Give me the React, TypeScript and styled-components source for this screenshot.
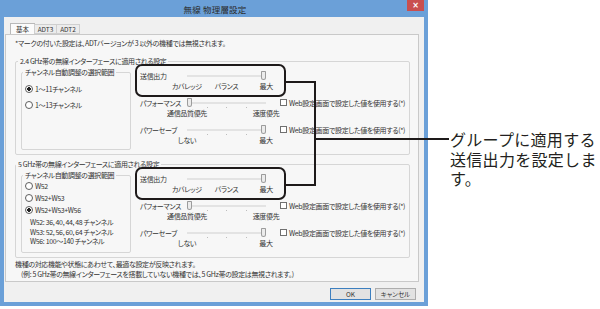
import styled, { createGlobalStyle } from 'styled-components';

const GlobalStyle = createGlobalStyle`
  html, body {
    margin: 0;
    padding: 0;
    background: #fff;
  }
  body {
    font-family: "Noto Sans CJK JP", "Noto Sans", sans-serif;
    color: #333;
  }
`;

// page + window frame
const Page = styled.div`
  position: relative;
  display: flex;
  width: 600px;
  height: 309px;
  overflow: hidden;
`;

const Window = styled.div`
  width: 428px;
  flex: none;
  display: flex;
  flex-direction: column;
  align-self: flex-start;
  background: #6ba0d8;
  padding: 0 4px 4px;
  box-sizing: border-box;
`;

const TitleBar = styled.div`
  height: 17px;
  display: grid;
  grid-template-columns: 1fr auto 1fr;
  align-items: center;
`;

const Title = styled.div`
  grid-column: 2;
  font-size: 8.5px;
  color: #2a2a2a;
  letter-spacing: 0.2px;
  padding-left: 2px;
`;

const CloseButton = styled.div`
  grid-column: 3;
  justify-self: end;
  align-self: start;
  width: 17px;
  height: 11px;
  background: #c94f4f;
  color: #fff;
  font-family: "DejaVu Sans", sans-serif;
  font-size: 8px;
  font-weight: bold;
  line-height: 11px;
  text-align: center;
`;

const Body = styled.div`
  background: #f0f0f0;
  padding: 7px 5px 2px 1px;
  font-size: 7px;
  letter-spacing: -0.35px;
  font-feature-settings: "palt";
`;

// tabs
const Tabs = styled.div`
  display: flex;
  margin-left: 5px;
  height: 10px;
  position: relative;
  z-index: 1;
`;

const Tab = styled.div<{ $active?: boolean; $w: number }>`
  width: ${p => p.$w}px;
  height: ${p => (p.$active ? 11 : 10)}px;
  box-sizing: border-box;
  border: 1px solid ${p => (p.$active ? '#b9b9b9' : '#cfcfcf')};
  border-bottom: ${p => (p.$active ? 'none' : '1px solid #cfcfcf')};
  margin-left: ${p => (p.$active ? 0 : -1)}px;
  margin-top: ${p => (p.$active ? -1 : 0)}px;
  background: ${p => (p.$active ? '#fbfbfb' : '#ececec')};
  font-size: 6.5px;
  letter-spacing: 0;
  line-height: ${p => (p.$active ? 10 : 8)}px;
  text-align: center;
  color: #333;
`;

const Panel = styled.div`
  border: 1px solid #c9c9c9;
  background: #f7f7f7;
  padding: 4px 8px 2px 9px;
`;

const Note = styled.div`
  line-height: 9px;
  white-space: nowrap;
`;

// group boxes
const Group = styled.fieldset<{ $gap: number }>`
  margin: ${p => p.$gap}px 0 0;
  padding: 2px 5px 4px;
  border: 1px solid #d6d6d6;
  border-radius: 2px;
  min-width: 0;
`;

const Legend = styled.legend<{ $shift?: number }>`
  padding: 0 2px;
  margin-left: ${p => p.$shift ?? -3}px;
  line-height: 9px;
  white-space: nowrap;
`;

const GroupRow = styled.div`
  display: flex;
  align-items: stretch;
`;

const ChannelBox = styled.fieldset`
  flex: none;
  width: 110px;
  box-sizing: border-box;
  margin: 0;
  padding: 0 3px 3px;
  border: 1px solid #d6d6d6;
  border-radius: 2px;
  min-width: 0;
`;

const RadioList = styled.div<{ $gap: number; $top: number }>`
  display: flex;
  flex-direction: column;
  gap: ${p => p.$gap}px;
  padding-top: ${p => p.$top}px;
`;

const RadioRow = styled.label`
  display: flex;
  align-items: center;
  gap: 2px;
  height: 12px;
  white-space: nowrap;
`;

const Radio = styled.span<{ $checked?: boolean }>`
  width: 8px;
  height: 8px;
  box-sizing: border-box;
  border-radius: 50%;
  border: 1px solid #5e5e5e;
  background: ${p =>
    p.$checked ? 'radial-gradient(circle, #222 0 1.6px, #fff 2.1px)' : '#fff'};
`;

const ChannelList = styled.div`
  margin-top: 2px;
  padding-left: 5px;
  line-height: 9.5px;
  white-space: nowrap;
`;

// sliders
const SliderColumn = styled.div`
  flex: 1;
  min-width: 0;
  display: flex;
  flex-direction: column;
  gap: 5px;
  padding: 2px 0 4px 9px;
`;

const SliderBlock = styled.div<{ $callout?: boolean }>`
  position: relative;
  &::after {
    content: '';
    display: ${p => (p.$callout ? 'block' : 'none')};
    position: absolute;
    left: -5px;
    top: -6px;
    bottom: -5px;
    width: 151px;
    box-sizing: border-box;
    border: 2px solid #1e1a1a;
    border-radius: 7px;
    pointer-events: none;
  }
`;

const SliderRow = styled.div`
  display: flex;
  align-items: center;
  height: 11px;
`;

const SliderLabel = styled.div`
  width: 47px;
  flex: none;
  white-space: nowrap;
`;

const Track = styled.div<{ $max?: boolean; $ticks?: boolean }>`
  width: 79px;
  flex: none;
  height: 11px;
  display: flex;
  align-items: center;
  justify-content: ${p => (p.$max ? 'flex-end' : 'flex-start')};
  background:
    ${p =>
      p.$ticks
        ? `linear-gradient(#bdbdbd, #bdbdbd) 25% 100% / 1px 1px no-repeat,
           linear-gradient(#bdbdbd, #bdbdbd) 50% 100% / 1px 1px no-repeat,
           linear-gradient(#bdbdbd, #bdbdbd) 75% 100% / 1px 1px no-repeat,`
        : ''}
    linear-gradient(#e3e3e3, #e3e3e3) 0 50% / 100% 2px no-repeat;
`;

const Thumb = styled.div`
  width: 5px;
  height: 9px;
  box-sizing: border-box;
  border: 1px solid #9c9c9c;
  border-radius: 1px 1px 3px 3px;
  background: #ececec;
`;

const SliderTicks = styled.div`
  display: flex;
  justify-content: space-between;
  margin-left: 27px;
  width: 119px;
  height: 11px;
  line-height: 11px;
`;

const TickLabel = styled.span`
  width: 40px;
  text-align: center;
  white-space: nowrap;
`;

const CheckRow = styled.label`
  display: flex;
  align-items: center;
  gap: 2px;
  margin-left: 14px;
  white-space: nowrap;
`;

const CheckBox = styled.span`
  width: 7px;
  height: 7px;
  flex: none;
  box-sizing: border-box;
  border: 1px solid #707070;
  background: #fff;
`;

const Footer = styled.div`
  margin-top: 2px;
  line-height: 9.5px;
  white-space: nowrap;
`;

const FooterIndent = styled.div`
  padding-left: 6px;
`;

// buttons
const ButtonRow = styled.div`
  display: flex;
  justify-content: flex-end;
  gap: 4px;
  margin: 6px 3px 0 0;
`;

const Button = styled.div<{ $primary?: boolean }>`
  width: 41px;
  height: 12px;
  box-sizing: border-box;
  border: 1px solid ${p => (p.$primary ? '#3d7fbf' : '#adadad')};
  background: #e2e2e2;
  font-size: 6.5px;
  letter-spacing: 0;
  line-height: 10px;
  text-align: center;
`;

// annotation on the right
const Annotation = styled.div`
  padding: 130px 0 0 22px;
  font-size: 16px;
  line-height: 19.5px;
  letter-spacing: 0.3px;
  color: #231f20;
  white-space: nowrap;
`;

const Connector = styled.svg`
  position: absolute;
  left: 0;
  top: 0;
  pointer-events: none;
`;

type Slider = {
  label: string;
  max?: boolean;
  ticks: string[];
  check?: boolean;
  callout?: boolean;
};

const sliders: Slider[] = [
  { label: '送信出力', max: true, ticks: ['カバレッジ', 'バランス', '最大'], callout: true },
  { label: 'パフォーマンス', ticks: ['通信品質優先', '速度優先'], check: true },
  { label: 'パワーセーブ', max: true, ticks: ['しない', '最大'], check: true },
];

function SliderStack() {
  return (
    <SliderColumn>
      {sliders.map(s => (
        <SliderBlock key={s.label} $callout={s.callout}>
          <SliderRow>
            <SliderLabel>{s.label}</SliderLabel>
            <Track $max={s.max} $ticks={s.check}>
              <Thumb />
            </Track>
            {s.check && (
              <CheckRow>
                <CheckBox />
                Web設定画面で設定した値を使用する(*)
              </CheckRow>
            )}
          </SliderRow>
          <SliderTicks>
            {s.ticks.map(t => (
              <TickLabel key={t}>{t}</TickLabel>
            ))}
          </SliderTicks>
        </SliderBlock>
      ))}
    </SliderColumn>
  );
}

export default function App() {
  return (
    <Page>
      <GlobalStyle />
      <Window>
        <TitleBar>
          <Title>無線 物理層設定</Title>
          <CloseButton>×</CloseButton>
        </TitleBar>
        <Body>
          <Tabs>
            <Tab $active $w={25}>基本</Tab>
            <Tab $w={23}>ADT3</Tab>
            <Tab $w={24}>ADT2</Tab>
          </Tabs>
          <Panel>
            <Note>*マークの付いた設定は、ADTバージョンが 3 以外の機種では無視されます。</Note>

            <Group $gap={9}>
              <Legend>2.4 GHz帯の無線インターフェースに適用される設定</Legend>
              <GroupRow>
                <ChannelBox>
                  <Legend $shift={-2}>チャンネル自動調整の選択範囲</Legend>
                  <RadioList $gap={4} $top={6}>
                    <RadioRow><Radio $checked />1〜11チャンネル</RadioRow>
                    <RadioRow><Radio />1〜13チャンネル</RadioRow>
                  </RadioList>
                </ChannelBox>
                <SliderStack />
              </GroupRow>
            </Group>

            <Group $gap={5}>
              <Legend $shift={-5}>5 GHz帯の無線インターフェースに適用される設定</Legend>
              <GroupRow>
                <ChannelBox>
                  <Legend $shift={-2}>チャンネル自動調整の選択範囲</Legend>
                  <RadioList $gap={0} $top={0}>
                    <RadioRow><Radio />W52</RadioRow>
                    <RadioRow><Radio />W52+W53</RadioRow>
                    <RadioRow><Radio $checked />W52+W53+W56</RadioRow>
                  </RadioList>
                  <ChannelList>
                    <div>W52: 36, 40, 44, 48 チャンネル</div>
                    <div>W53: 52, 56, 60, 64 チャンネル</div>
                    <div>W56: 100〜140 チャンネル</div>
                  </ChannelList>
                </ChannelBox>
                <SliderStack />
              </GroupRow>
            </Group>

            <Footer>
              <div>機種の対応機能や状態にあわせて、最適な設定が反映されます。</div>
              <FooterIndent>(例: 5 GHz帯の無線インターフェースを搭載していない機種では、5 GHz帯の設定は無視されます。)</FooterIndent>
            </Footer>
          </Panel>
          <ButtonRow>
            <Button $primary>OK</Button>
            <Button>キャンセル</Button>
          </ButtonRow>
        </Body>
      </Window>

      <Annotation>
        グループに適用する
        <br />
        送信出力を設定しま
        <br />
        す。
      </Annotation>

      <Connector width="600" height="309" viewBox="0 0 600 309">
        <path d="M286 82 H315 V185 H286 M315 139 H449" fill="none" stroke="#1e1a1a" strokeWidth="2" />
      </Connector>
    </Page>
  );
}
